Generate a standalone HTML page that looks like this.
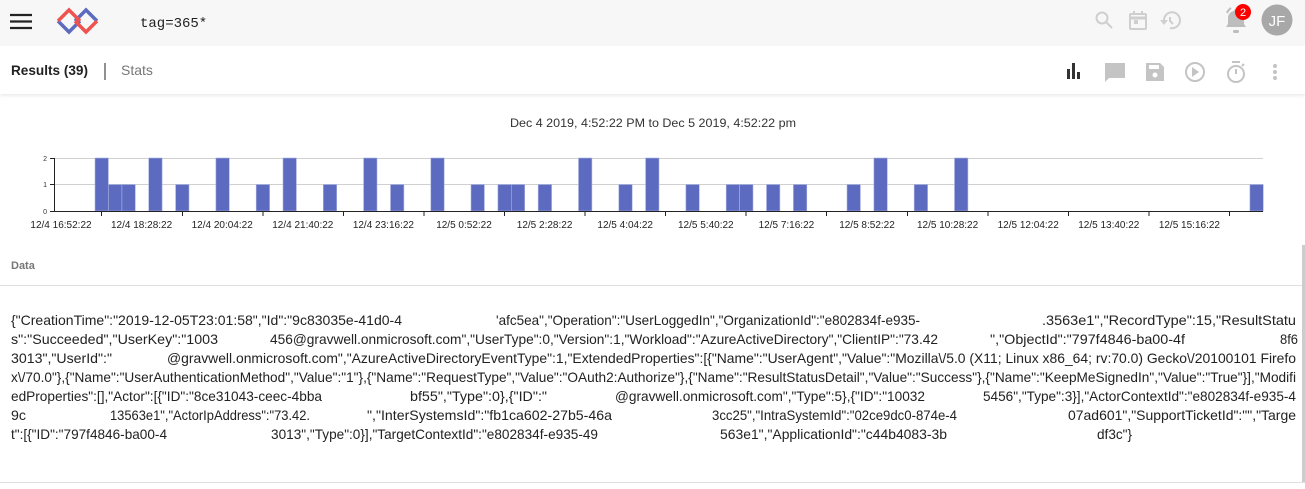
<!DOCTYPE html>
<html><head><meta charset="utf-8"><style>
html,body{margin:0;padding:0;width:1305px;height:489px;overflow:hidden;background:#fff;font-family:"Liberation Sans",sans-serif}
.top{position:absolute;left:0;top:0;width:1305px;height:46px;background:#f7f7f7}
.bar2{position:absolute;left:0;top:46px;width:1305px;height:48px;background:#fff;box-shadow:0 2px 3px rgba(0,0,0,0.08)}
svg{position:absolute;left:0;top:0}
</style></head><body>
<div class="top"></div>
<div class="bar2"></div>
<svg width="1305" height="489" viewBox="0 0 1305 489">
<g stroke="#222" stroke-width="2.2"><line x1="10" y1="15" x2="32" y2="15"/><line x1="10" y1="21.5" x2="32" y2="21.5"/><line x1="10" y1="28" x2="32" y2="28"/></g>
<g fill="none" stroke-width="3.5" stroke-linejoin="miter">
<polyline points="58,21 69,32 80,21" stroke="#5c6bc0"/>
<polyline points="75,21 86,10 97,21" stroke="#5c6bc0"/>
<polyline points="58,21 69,10 80,21" stroke="#ef5350"/>
<polyline points="75,21 86,32 97,21" stroke="#ef5350"/>
</g>
<text x="140" y="27" font-family="Liberation Mono,monospace" font-size="14" fill="#222">tag=365*</text>
<g fill="none" stroke="#cfcfcf" stroke-width="2">
<circle cx="1102" cy="18" r="5.5"/><line x1="1106" y1="22" x2="1112" y2="28"/>
<rect x="1130" y="14" width="16" height="15" rx="1"/><line x1="1130" y1="18" x2="1146" y2="18" stroke-width="3"/><line x1="1134" y1="11" x2="1134" y2="15"/><line x1="1142" y1="11" x2="1142" y2="15"/>
<path d="M1164 21 A8 8 0 1 1 1170 28"/><polyline points="1170,17 1170,21 1173,24"/>
</g>
<rect x="1134" y="20" width="4" height="4" fill="#cfcfcf"/>
<polygon points="1160,20 1168,20 1164,25" fill="#cfcfcf"/>
<path d="M1236 9 a2 2 0 0 1 2 2 a7 7 0 0 1 6 7 v6 l2 3 h-20 l2 -3 v-6 a7 7 0 0 1 6 -7 a2 2 0 0 1 2 -2z" fill="#bdbdbd"/>
<rect x="1233" y="30" width="6" height="3" rx="1.5" fill="#bdbdbd"/>
<path d="M1227 13 a11 11 0 0 1 4 -5" stroke="#bdbdbd" stroke-width="2" fill="none"/>
<circle cx="1243" cy="12" r="8" fill="#f00"/>
<text x="1243" y="16" font-size="11" fill="#fff" text-anchor="middle">2</text>
<circle cx="1277" cy="20" r="15.5" fill="#a8a8a8"/>
<text x="1277" y="26" font-size="15" fill="#fff" text-anchor="middle">JF</text>
<text x="11" y="75" font-size="14" font-weight="bold" fill="#222" textLength="77" lengthAdjust="spacingAndGlyphs">Results (39)</text>
<line x1="105" y1="63" x2="105" y2="80" stroke="#222" stroke-width="1"/>
<text x="121" y="75" font-size="14" fill="#777">Stats</text>
<g fill="#333"><rect x="1067" y="69" width="3" height="10"/><rect x="1072" y="63" width="3" height="16"/><rect x="1077" y="72" width="3" height="7"/></g>
<path d="M1105 63 h20 v15 h-16 l-4 4z" fill="#c4c4c4"/>
<path d="M1146 63 h14 l4 4 v14 h-18z" fill="#c4c4c4"/><rect x="1149" y="65" width="10" height="4" fill="#fff"/><circle cx="1155" cy="75" r="2.5" fill="#fff"/>
<circle cx="1195" cy="72" r="9" fill="none" stroke="#c4c4c4" stroke-width="2"/><polygon points="1192,67 1199,72 1192,77" fill="#c4c4c4"/>
<circle cx="1236" cy="74" r="8" fill="none" stroke="#c4c4c4" stroke-width="2"/><line x1="1232" y1="62" x2="1240" y2="62" stroke="#c4c4c4" stroke-width="2"/><line x1="1236" y1="74" x2="1236" y2="69" stroke="#c4c4c4" stroke-width="2"/><line x1="1242" y1="66" x2="1244" y2="64" stroke="#c4c4c4" stroke-width="2"/>
<g fill="#c4c4c4"><circle cx="1275" cy="66" r="2"/><circle cx="1275" cy="72" r="2"/><circle cx="1275" cy="78" r="2"/></g>
<text x="510" y="127" font-size="12" fill="#333" textLength="286" lengthAdjust="spacingAndGlyphs">Dec 4 2019, 4:52:22 PM to Dec 5 2019, 4:52:22 pm</text>
<g stroke="#d0d0d0" stroke-width="1"><line x1="54" y1="158.5" x2="1263" y2="158.5"/><line x1="54" y1="184.5" x2="1263" y2="184.5"/></g>
<g fill="#5c6bc0" stroke="#aab2e0" stroke-width="0.6">
<rect x="95" y="158" width="13.4" height="53"/><rect x="108.4" y="184.5" width="13.4" height="26.5"/><rect x="121.9" y="184.5" width="13.4" height="26.5"/>
<rect x="148.7" y="158" width="13.4" height="53"/><rect x="175.6" y="184.5" width="13.4" height="26.5"/><rect x="215.9" y="158" width="13.4" height="53"/>
<rect x="256.2" y="184.5" width="13.4" height="26.5"/><rect x="283" y="158" width="13.4" height="53"/><rect x="323.3" y="184.5" width="13.4" height="26.5"/>
<rect x="363.6" y="158" width="13.4" height="53"/><rect x="390.5" y="184.5" width="13.4" height="26.5"/><rect x="430.8" y="158" width="13.4" height="53"/>
<rect x="471" y="184.5" width="13.4" height="26.5"/><rect x="497.9" y="184.5" width="13.4" height="26.5"/><rect x="511.3" y="184.5" width="13.4" height="26.5"/>
<rect x="538.2" y="184.5" width="13.4" height="26.5"/><rect x="578.5" y="158" width="13.4" height="53"/><rect x="618.8" y="184.5" width="13.4" height="26.5"/>
<rect x="645.6" y="158" width="13.4" height="53"/><rect x="685.9" y="184.5" width="13.4" height="26.5"/><rect x="726.2" y="184.5" width="13.4" height="26.5"/>
<rect x="739.6" y="184.5" width="13.4" height="26.5"/><rect x="766.5" y="184.5" width="13.4" height="26.5"/><rect x="793.4" y="184.5" width="13.4" height="26.5"/>
<rect x="847" y="184.5" width="13.4" height="26.5"/><rect x="873.9" y="158" width="13.4" height="53"/><rect x="914.2" y="184.5" width="13.4" height="26.5"/>
<rect x="954.5" y="158" width="13.4" height="53"/><rect x="1249.9" y="184.5" width="13.4" height="26.5"/>
</g>
<g stroke="#222" stroke-width="1">
<line x1="54" y1="211.5" x2="1263" y2="211.5"/><line x1="54.5" y1="158" x2="54.5" y2="212"/>
<line x1="50" y1="158.5" x2="54" y2="158.5"/><line x1="50" y1="184.5" x2="54" y2="184.5"/><line x1="50" y1="211.5" x2="54" y2="211.5"/>
</g>
<g stroke="#222" stroke-width="1">
<line x1="101.5" y1="211" x2="101.5" y2="216"/><line x1="182.5" y1="211" x2="182.5" y2="216"/><line x1="263" y1="211" x2="263" y2="216"/><line x1="343.5" y1="211" x2="343.5" y2="216"/><line x1="424" y1="211" x2="424" y2="216"/><line x1="504.5" y1="211" x2="504.5" y2="216"/><line x1="585" y1="211" x2="585" y2="216"/><line x1="665.5" y1="211" x2="665.5" y2="216"/><line x1="746" y1="211" x2="746" y2="216"/><line x1="826.5" y1="211" x2="826.5" y2="216"/><line x1="907.5" y1="211" x2="907.5" y2="216"/><line x1="988" y1="211" x2="988" y2="216"/><line x1="1068.5" y1="211" x2="1068.5" y2="216"/><line x1="1149" y1="211" x2="1149" y2="216"/><line x1="1229.5" y1="211" x2="1229.5" y2="216"/>
</g>
<g font-size="7" fill="#333" text-anchor="end"><text x="47" y="161">2</text><text x="47" y="187">1</text><text x="47" y="214">0</text></g>
<g font-size="10" fill="#222" text-anchor="middle">
<text x="61" y="228">12/4 16:52:22</text><text x="141.6" y="228">12/4 18:28:22</text><text x="222.2" y="228">12/4 20:04:22</text><text x="302.8" y="228">12/4 21:40:22</text><text x="383.4" y="228">12/4 23:16:22</text><text x="464" y="228">12/5 0:52:22</text><text x="544.6" y="228">12/5 2:28:22</text><text x="625.2" y="228">12/5 4:04:22</text><text x="705.8" y="228">12/5 5:40:22</text><text x="786.4" y="228">12/5 7:16:22</text><text x="867" y="228">12/5 8:52:22</text><text x="947.6" y="228">12/5 10:28:22</text><text x="1028.2" y="228">12/5 12:04:22</text><text x="1108.8" y="228">12/5 13:40:22</text><text x="1189.4" y="228">12/5 15:16:22</text>
</g>
<text x="11" y="269" font-size="11" font-weight="bold" fill="#777">Data</text>
<line x1="0" y1="285.5" x2="1305" y2="285.5" stroke="#e0e0e0"/>
<line x1="0" y1="482.5" x2="1305" y2="482.5" stroke="#e0e0e0"/>
<rect x="1302" y="245" width="3" height="237" fill="#ccc"/>
<g font-size="14" fill="#222">
<text x="11" y="325" textLength="391" lengthAdjust="spacingAndGlyphs">{"CreationTime":"2019-12-05T23:01:58","Id":"9c83035e-41d0-4</text>
<text x="496" y="325" textLength="424" lengthAdjust="spacingAndGlyphs">'afc5ea","Operation":"UserLoggedIn","OrganizationId":"e802834f-e935-</text>
<text x="1042" y="325" textLength="254" lengthAdjust="spacingAndGlyphs">.3563e1","RecordType":15,"ResultStatu</text>
<text x="11" y="344" textLength="207" lengthAdjust="spacingAndGlyphs">s":"Succeeded","UserKey":"1003</text>
<text x="270" y="344" textLength="668" lengthAdjust="spacingAndGlyphs">456@gravwell.onmicrosoft.com","UserType":0,"Version":1,"Workload":"AzureActiveDirectory","ClientIP":"73.42</text>
<text x="990" y="344" textLength="195" lengthAdjust="spacingAndGlyphs">","ObjectId":"797f4846-ba00-4f</text>
<text x="1280" y="344" textLength="18" lengthAdjust="spacingAndGlyphs">8f6</text>
<text x="11" y="363" textLength="101" lengthAdjust="spacingAndGlyphs">3013","UserId":"</text>
<text x="167" y="363" textLength="1129" lengthAdjust="spacingAndGlyphs">@gravwell.onmicrosoft.com","AzureActiveDirectoryEventType":1,"ExtendedProperties":[{"Name":"UserAgent","Value":"Mozilla\/5.0 (X11; Linux x86_64; rv:70.0) Gecko\/20100101 Firefo</text>
<text x="11" y="382" textLength="1285" lengthAdjust="spacingAndGlyphs">x\/70.0"},{"Name":"UserAuthenticationMethod","Value":"1"},{"Name":"RequestType","Value":"OAuth2:Authorize"},{"Name":"ResultStatusDetail","Value":"Success"},{"Name":"KeepMeSignedIn","Value":"True"}],"Modifi</text>
<text x="11" y="401" textLength="311" lengthAdjust="spacingAndGlyphs">edProperties":[],"Actor":[{"ID":"8ce31043-ceec-4bba</text>
<text x="410" y="401" textLength="137" lengthAdjust="spacingAndGlyphs">bf55","Type":0},{"ID":"</text>
<text x="615" y="401" textLength="310" lengthAdjust="spacingAndGlyphs">@gravwell.onmicrosoft.com","Type":5},{"ID":"10032</text>
<text x="983" y="401" textLength="313" lengthAdjust="spacingAndGlyphs">5456","Type":3}],"ActorContextId":"e802834f-e935-4</text>
<text x="11" y="420" textLength="15" lengthAdjust="spacingAndGlyphs">9c</text>
<text x="110" y="420" textLength="200" lengthAdjust="spacingAndGlyphs">13563e1","ActorIpAddress":"73.42.</text>
<text x="367" y="420" textLength="245" lengthAdjust="spacingAndGlyphs">","InterSystemsId":"fb1ca602-27b5-46a</text>
<text x="712" y="420" textLength="245" lengthAdjust="spacingAndGlyphs">3cc25","IntraSystemId":"02ce9dc0-874e-4</text>
<text x="1068" y="420" textLength="228" lengthAdjust="spacingAndGlyphs">07ad601","SupportTicketId":"","Targe</text>
<text x="11" y="439" textLength="156" lengthAdjust="spacingAndGlyphs">t":[{"ID":"797f4846-ba00-4</text>
<text x="271" y="439" textLength="327" lengthAdjust="spacingAndGlyphs">3013","Type":0}],"TargetContextId":"e802834f-e935-49</text>
<text x="720" y="439" textLength="227" lengthAdjust="spacingAndGlyphs">563e1","ApplicationId":"c44b4083-3b</text>
<text x="1097" y="439" textLength="35" lengthAdjust="spacingAndGlyphs">df3c"}</text>
</g>
</svg>
</body></html>
